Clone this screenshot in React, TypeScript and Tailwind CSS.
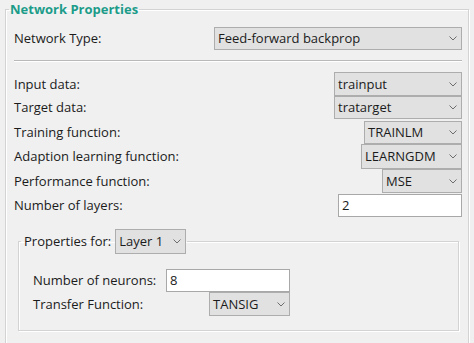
import React from "react";

const Chevron = () => (
    <span className="w-[17px] h-full flex items-center justify-center flex-shrink-0">
        <svg width="8" height="5" viewBox="0 0 8 5" fill="none">
            <polyline points="0.5,0.5 4,4 7.5,0.5" stroke="#6d6d6d" strokeWidth="1" />
        </svg>
    </span>
);

const Select = ({ value, className }: { value: string; className: string }) => (
    <div className={`flex items-center bg-[#e1e1e1] border border-[#adadad] pl-[3px] ${className}`}>
        <span className="flex-1 whitespace-nowrap">{value}</span>
        <Chevron />
    </div>
);

const TextInput = ({ value, className }: { value: string; className: string }) => (
    <div className={`flex items-center bg-white border border-[#a8a8a8] pl-[3px] ${className}`}>
        {value}
    </div>
);

const Row = ({ label, children, className = "" }: { label: string; children: React.ReactNode; className?: string }) => (
    <div className={`flex items-center justify-between ${className}`}>
        <span className="whitespace-nowrap">{label}</span>
        {children}
    </div>
);

export default function App() {
    return (
        <div className="w-[474px] h-[343px] overflow-hidden bg-[#f0f0f0] text-[13px] text-[#1b1b1b] font-['Open_Sans','Noto_Sans',sans-serif] leading-none">
            <fieldset className="ml-[5px] w-[464px] h-[400px] border border-[#d3d3d3] shadow-[inset_1px_1px_0_#fff,1px_1px_0_#fff]">
                <legend className="ml-[3px] px-[1px] text-[#1d9c8a] font-bold text-[13px] leading-[18px]">
                    Network Properties
                </legend>

                <div className="pl-[8px] pr-[6px] pt-[9px]">
                    {/* Network type */}
                    <Row label="Network Type:">
                        <Select value="Feed-forward backprop" className="w-[248px] h-[23px]" />
                    </Row>

                    <div className="mt-[10px] h-px bg-[#b9b9b9] shadow-[0_1px_0_#fff]" />

                    {/* Data + functions */}
                    <Row label="Input data:" className="mt-[11px]">
                        <Select value="trainput" className="w-[128px] h-[24px]" />
                    </Row>
                    <Row label="Target data:">
                        <Select value="tratarget" className="w-[128px] h-[23px]" />
                    </Row>
                    <Row label="Training function:" className="mt-[2px]">
                        <Select value="TRAINLM" className="w-[98px] h-[23px]" />
                    </Row>
                    <Row label="Adaption learning function:">
                        <Select value="LEARNGDM" className="w-[101px] h-[25px]" />
                    </Row>
                    <Row label="Performance function:">
                        <Select value="MSE" className="w-[80px] h-[24px]" />
                    </Row>
                    <Row label="Number of layers:" className="mt-[1px]">
                        <TextInput value="2" className="w-[124px] h-[23px]" />
                    </Row>

                    {/* Layer properties */}
                    <fieldset className="mt-[12px] ml-[4px] w-[441px] border border-[#d3d3d3] shadow-[inset_1px_1px_0_#fff,1px_1px_0_#fff]">
                        <legend className="ml-[2px] pl-[3px] pr-[1px] flex items-center gap-[4px]">
                            <span className="whitespace-nowrap">Properties for:</span>
                            <Select value="Layer 1" className="w-[71px] h-[25px]" />
                        </legend>
                        <div className="pl-[14px] pt-[15px] pb-[14px] w-[271px]">
                            <Row label="Number of neurons:">
                                <TextInput value="8" className="w-[124px] h-[23px]" />
                            </Row>
                            <Row label="Transfer Function:">
                                <Select value="TANSIG" className="w-[81px] h-[24px]" />
                            </Row>
                        </div>
                    </fieldset>
                </div>
            </fieldset>
        </div>
    );
}
